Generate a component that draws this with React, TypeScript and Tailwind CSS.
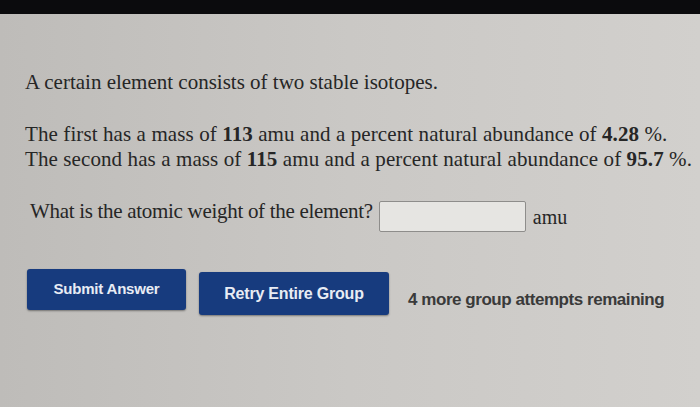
import React from 'react';

const serif = { fontFamily: '"Liberation Serif", "DejaVu Serif", serif' };

const App: React.FC = () => {
  return (
    <div className="w-[700px] h-[407px] overflow-hidden bg-[#c9c7c4] flex flex-col">
      <div className="h-[14px] bg-[#0b0b0d] shrink-0" />

      <div className="flex-1 bg-gradient-to-r from-[#bebcb9] via-[#cac8c5] to-[#d2d0cd] pl-[25px] pt-[56px] text-[#262626]" style={serif}>
        <p className="text-[21px] leading-[25px]">A certain element consists of two stable isotopes.</p>

        <div className="mt-[27px] text-[21px] leading-[25px] tracking-[0.1px]">
          <p>
            The first has a mass of <b>113</b> amu and a percent natural abundance of <b>4.28</b> %.
          </p>
          <p>
            The second has a mass of <b>115</b> amu and a percent natural abundance of <b>95.7</b> %.
          </p>
        </div>

        <div className="mt-[29px] pl-[5px] flex items-start">
          <span className="mt-[-2px] text-[21px] leading-[25px] tracking-[-0.3px]">What is the atomic weight of the element?</span>
          <div className="ml-[6px] w-[147px] h-[31px] bg-[#e6e5e2] border border-[#8e8d8b] rounded-[2px]" />
          <span className="ml-[7px] mt-[4px] text-[20px] leading-[25px]">amu</span>
        </div>

        <div className="mt-[37px] pl-[2px] flex items-start" style={{ fontFamily: '"Liberation Sans", Arial, sans-serif' }}>
          <button className="w-[159px] h-[41px] bg-[#173b7e] text-[#e8ecf4] text-[15px] font-bold rounded-[3px] shadow-[0_1px_2px_rgba(0,0,0,0.4)] tracking-[-0.2px]">
            Submit Answer
          </button>
          <button className="ml-[13px] mt-[3px] w-[190px] h-[43px] bg-[#173b7e] text-[#e8ecf4] text-[16px] font-bold rounded-[3px] shadow-[0_1px_2px_rgba(0,0,0,0.4)] tracking-[-0.2px]">
            Retry Entire Group
          </button>
          <span className="ml-[19px] mt-[21px] text-[17px] leading-[20px] font-bold text-[#3a3a3a] tracking-[-0.45px]">
            4 more group attempts remaining
          </span>
        </div>
      </div>
    </div>
  );
};

export default App;
